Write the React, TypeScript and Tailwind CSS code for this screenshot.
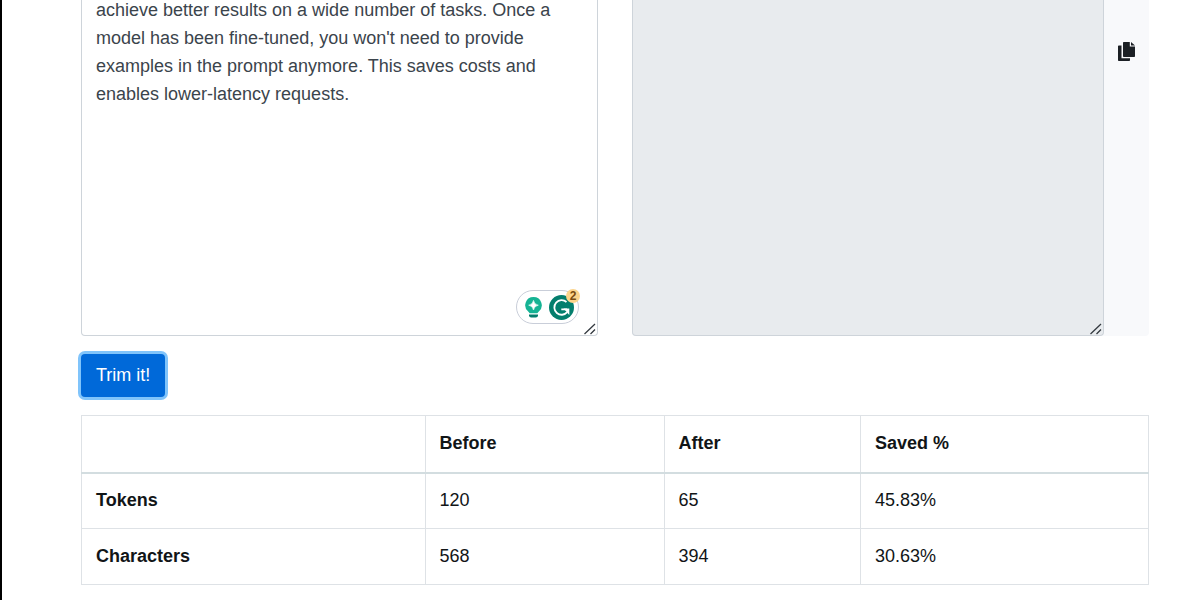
import { useState } from "react";

const initialPrompt =
  "achieve better results on a wide number of tasks. Once a model has been fine-tuned, you won't need to provide examples in the prompt anymore. This saves costs and enables lower-latency requests.";

const rows = [
  { label: "Tokens", before: "120", after: "65", saved: "45.83%" },
  { label: "Characters", before: "568", after: "394", saved: "30.63%" },
];

function ResizeGrip() {
  return (
    <svg
      className="pointer-events-none absolute right-0.5 bottom-px size-3"
      viewBox="0 0 12 12"
      fill="none"
      stroke="#343a40"
      strokeWidth="1.3"
      aria-hidden="true"
    >
      <path d="M0.5 11 11 1M6.5 11 11 6.5" />
    </svg>
  );
}

function CopyIcon() {
  return (
    <svg className="h-[19px] w-[17px]" viewBox="0 0 17 19" fill="currentColor" aria-hidden="true">
      <path d="M5.800 0h6v4.600H17v9.600a.8.8 0 0 1-.8.8H5.800a.8.8 0 0 1-.8-.8V.8a.8.8 0 0 1 .8-.8Z" />
      <path d="M13 0 17 3.500H13Z" />
      <path d="M.8 3.500H3.500V16.300H12V18.200a.8.8 0 0 1-.8.8H.8a.8.8 0 0 1-.8-.8V4.300a.8.8 0 0 1 .8-.8Z" />
    </svg>
  );
}

function AssistantBadge() {
  return (
    <div className="absolute right-[19px] bottom-3 flex h-[34px] w-[63px] items-center justify-between rounded-full border border-[#c9ced9] bg-white pr-1 pl-2">
      <svg className="h-[22px] w-[17px]" viewBox="0 0 17 22" aria-hidden="true">
        <path
          d="M8.5 1a8.2 8.2 0 0 0-5.3 14.5l1.5 1.7h7.6l1.5-1.7A8.2 8.2 0 0 0 8.5 1Z"
          fill="#15b394"
        />
        <path d="M4 18.500h9v.8a2.200 2.200 0 0 1-2.200 2.200H6.200a2.200 2.200 0 0 1-2.200-2.200Z" fill="#047e6d" />
        <path
          d="M8.5 4.4Q9.2 8.5 13.3 9.2 9.2 9.9 8.5 14 7.8 9.9 3.7 9.2 7.8 8.5 8.5 4.4Z"
          fill="#fff"
          stroke="#fff"
          strokeWidth=".6"
        />
      </svg>
      <svg className="size-[25px]" viewBox="0 0 25 25" aria-hidden="true">
        <circle cx="12.5" cy="12.5" r="12.5" fill="#047e6d" />
        <path
          d="M17.500 7A7.300 7.300 0 1 0 18.200 17.200M12.300 14.300H18"
          fill="none"
          stroke="#fff"
          strokeWidth="1.8"
        />
        <path d="M14.500 13.400h5.800v6.600Z" fill="#fff" />
      </svg>
      <span className="absolute -top-0.5 -right-0.5 flex size-[14px] items-center justify-center rounded-full bg-[#fcd48b] text-xs leading-none font-bold text-[#7a4b10]">
        2
      </span>
    </div>
  );
}

export default function App() {
  const [prompt, setPrompt] = useState(initialPrompt);

  return (
    <main className="min-h-screen overflow-hidden border-l-2 border-black bg-white pr-[51px] pb-[14px] pl-[79px] font-['Liberation_Sans',Arial,sans-serif] text-lg text-[#111517]">
      <div className="-mt-1 grid grid-cols-2 gap-[34px]">
        <div className="relative">
          <textarea
            aria-label="Prompt"
            value={prompt}
            onChange={(e) => setPrompt(e.target.value)}
            className="block h-[340px] w-full resize-none rounded-b border border-t-0 border-[#ced4da] bg-white px-[14px] leading-7 text-[#3b444c] outline-none"
          />
          <AssistantBadge />
          <ResizeGrip />
        </div>
        <div className="flex rounded-b bg-[#f8f9fb]">
          <div className="relative grow">
            <textarea
              aria-label="Trimmed prompt"
              readOnly
              className="block h-[340px] w-full resize-none rounded-b border border-t-0 border-[#ced4da] bg-[#e8ebee] px-[14px] leading-7 outline-none"
            />
            <ResizeGrip />
          </div>
          <div className="flex w-[45px] items-start pt-[46px] pl-[14px]">
            <button type="button" aria-label="Copy" className="text-[#1b1f24]">
              <CopyIcon />
            </button>
          </div>
        </div>
      </div>

      <button
        type="button"
        className="mt-[18px] block h-[43px] rounded bg-[#0069d9] px-[15px] pb-0.5 text-white ring-3 ring-[#80c4fb]"
      >
        Trim it!
      </button>

      <table className="mt-[18px] w-full table-fixed border-collapse text-left leading-7">
        <colgroup>
          <col className="w-[32.2%]" />
          <col className="w-[22.4%]" />
          <col className="w-[18.4%]" />
          <col className="w-[27%]" />
        </colgroup>
        <thead>
          <tr className="h-[57px] border-b-2 border-[#d3dde0]">
            <td className="border-x border-t border-[#dee2e6] px-[14px]" />
            {["Before", "After", "Saved %"].map((heading) => (
              <th key={heading} scope="col" className="border-x border-t border-[#dee2e6] px-[14px] pb-0.5">
                {heading}
              </th>
            ))}
          </tr>
        </thead>
        <tbody>
          {rows.map((row) => (
            <tr key={row.label} className="h-14">
              <th scope="row" className="border-x border-b border-[#dee2e6] px-[14px] pb-0.5">
                {row.label}
              </th>
              <td className="border-x border-b border-[#dee2e6] px-[14px] pb-0.5">{row.before}</td>
              <td className="border-x border-b border-[#dee2e6] px-[14px] pb-0.5">{row.after}</td>
              <td className="border-x border-b border-[#dee2e6] px-[14px] pb-0.5">{row.saved}</td>
            </tr>
          ))}
        </tbody>
      </table>
    </main>
  );
}
